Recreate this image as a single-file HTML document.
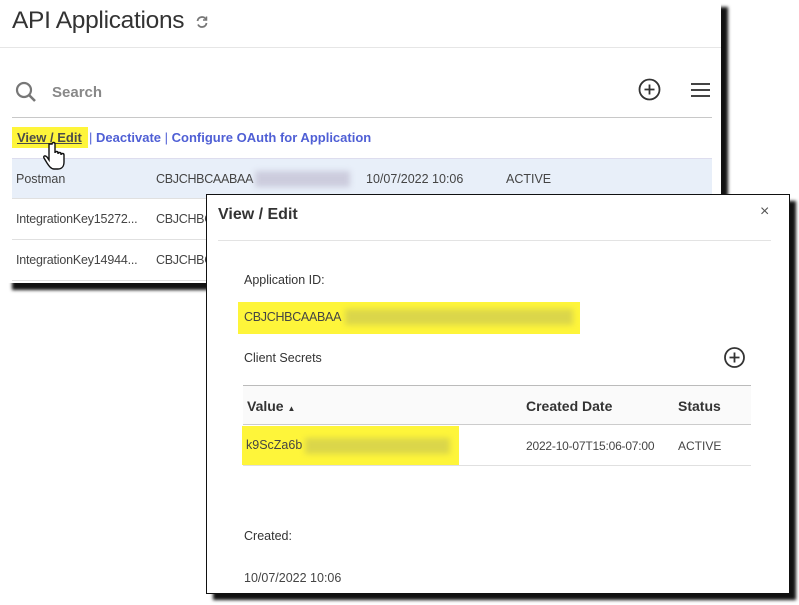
<!DOCTYPE html>
<html><head><style>
*{margin:0;padding:0;box-sizing:border-box}
body{width:799px;height:605px;background:#fff;position:relative;overflow:hidden;font-family:"Liberation Sans",sans-serif;color:#444}
.a{position:absolute;white-space:nowrap}
.t13{font-size:12.5px}
</style></head><body>
<div class="a" style="left:12px;top:7px;width:716px;height:283px;background:#111;filter:blur(1.5px)"></div>
<div class="a" style="left:0;top:0;width:721px;height:283px;background:#fff"></div>
<div class="a" style="left:12px;top:7px;font-size:24.5px;color:#333;letter-spacing:-0.3px">API Applications</div>
<svg class="a" style="left:195px;top:15px" width="14" height="14" viewBox="0 0 14 14"><path d="M2.5 6A4.5 4.5 0 0 1 11 4.5M11.5 8A4.5 4.5 0 0 1 3 9.5" fill="none" stroke="#777" stroke-width="1.8"/><path d="M11.5 1.5v3.5H8" fill="none" stroke="#777" stroke-width="1.5"/></svg>
<div class="a" style="left:0;top:47px;width:721px;height:1px;background:#e6e6e6"></div>
<svg class="a" style="left:15px;top:81px" width="22" height="22" viewBox="0 0 22 22"><circle cx="9" cy="9" r="7" fill="none" stroke="#777" stroke-width="2.2"/><path d="M14 14l6 6" stroke="#777" stroke-width="2.6"/></svg>
<div class="a" style="left:52px;top:84px;font-size:15px;font-weight:bold;color:#888">Search</div>
<svg class="a" style="left:638px;top:78px" width="23" height="23" viewBox="0 0 23 23"><circle cx="11.5" cy="11.5" r="10" fill="none" stroke="#333" stroke-width="1.8"/><path d="M11.5 6.5v10M6.5 11.5h10" stroke="#333" stroke-width="1.8"/></svg>
<div class="a" style="left:691px;top:83px;width:19px;height:2px;background:#444"></div>
<div class="a" style="left:691px;top:89px;width:19px;height:2px;background:#444"></div>
<div class="a" style="left:691px;top:95px;width:19px;height:2px;background:#444"></div>
<div class="a" style="left:12px;top:117px;width:700px;height:1px;background:#c8c8c8"></div>
<div class="a" style="left:12px;top:127px;width:76px;height:21px;background:#fef53a"></div>
<div class="a" style="left:17px;top:130px;font-size:13px;font-weight:bold;color:#4a4a4a;text-decoration:underline">View / Edit</div>
<div class="a" style="left:89px;top:130px;font-size:13px;font-weight:bold;color:#4f5fd5"><span style="font-weight:normal">|</span> Deactivate <span style="font-weight:normal">|</span> Configure OAuth for Application</div>
<div class="a" style="left:12px;top:158px;width:700px;height:40px;background:#e8eff9;border-top:1px solid #dde"></div>
<div class="a t13" style="left:16px;top:172px">Postman</div>
<div class="a t13" style="left:156px;top:172px;letter-spacing:-0.3px">CBJCHBCAABAA</div>
<div class="a" style="left:255px;top:171px;width:95px;height:16px;background:#ccd;filter:blur(3px)"></div>
<div class="a t13" style="left:366px;top:172px">10/07/2022 10:06</div>
<div class="a t13" style="left:506px;top:172px">ACTIVE</div>
<div class="a" style="left:12px;top:198px;width:700px;height:1px;background:#e0e0e0"></div>
<div class="a t13" style="left:16px;top:212px;letter-spacing:-0.2px">IntegrationKey15272...</div>
<div class="a t13" style="left:156px;top:212px;letter-spacing:-0.3px">CBJCHBC</div>
<div class="a" style="left:12px;top:239px;width:700px;height:1px;background:#e0e0e0"></div>
<div class="a t13" style="left:16px;top:253px;letter-spacing:-0.2px">IntegrationKey14944...</div>
<div class="a t13" style="left:156px;top:253px;letter-spacing:-0.3px">CBJCHBC</div>
<div class="a" style="left:12px;top:280px;width:700px;height:1px;background:#e0e0e0"></div>
<svg class="a" style="left:43px;top:141px;z-index:5" width="28" height="32" viewBox="0 0 28 32"><path d="M9 3c0-2 3-2 3 0v9c0-2 3-2 3 0v1c0-2 3-2 3 0v1c0-2 3-2 3 0v7c0 4-2 7-6 7h-4c-3 0-5-3-7-6l-3-5c-1-2 1-3 3-1l2 3V3z" fill="#fff" stroke="#111" stroke-width="1.4"/></svg>
<div class="a" style="left:213px;top:201px;width:583px;height:399px;background:#111;filter:blur(1.5px)"></div>
<div class="a" style="left:206px;top:194px;width:584px;height:400px;background:#fff;border:1px solid #111"></div>
<div class="a" style="left:218px;top:206px;font-size:16px;font-weight:bold;color:#333">View / Edit</div>
<div class="a" style="left:760px;top:203px;font-size:16px;color:#555">×</div>
<div class="a" style="left:218px;top:240px;width:553px;height:1px;background:#e3e3e3"></div>
<div class="a t13" style="left:244px;top:273px;color:#333">Application ID:</div>
<div class="a" style="left:238px;top:302px;width:342px;height:32px;background:#fef53a"></div>
<div class="a t13" style="left:244px;top:310px;color:#444;letter-spacing:-0.3px">CBJCHBCAABAA</div>
<div class="a" style="left:345px;top:309px;width:228px;height:16px;background:#dbd64a;filter:blur(3px)"></div>
<div class="a t13" style="left:244px;top:351px;color:#333">Client Secrets</div>
<svg class="a" style="left:723px;top:346px" width="23" height="23" viewBox="0 0 23 23"><circle cx="11.5" cy="11.5" r="9.5" fill="none" stroke="#333" stroke-width="1.8"/><path d="M11.5 6.5v10M6.5 11.5h10" stroke="#333" stroke-width="1.8"/></svg>
<div class="a" style="left:243px;top:385px;width:508px;height:40px;background:#fafafa;border-top:1px solid #bbb;border-bottom:1px solid #ccc"></div>
<div class="a" style="left:247px;top:398px;font-size:14px;font-weight:bold;color:#333">Value <span style="font-size:8px">▲</span></div>
<div class="a" style="left:526px;top:398px;font-size:14px;font-weight:bold;color:#333">Created Date</div>
<div class="a" style="left:678px;top:398px;font-size:14px;font-weight:bold;color:#333">Status</div>
<div class="a" style="left:242px;top:426px;width:217px;height:39px;background:#fef53a"></div>
<div class="a t13" style="left:246px;top:438px">k9ScZa6b</div>
<div class="a" style="left:305px;top:438px;width:145px;height:16px;background:#dbd64a;filter:blur(3px)"></div>
<div class="a" style="left:526px;top:439px;font-size:12px;letter-spacing:-0.2px">2022-10-07T15:06-07:00</div>
<div class="a" style="left:678px;top:439px;font-size:12px">ACTIVE</div>
<div class="a" style="left:243px;top:465px;width:508px;height:1px;background:#e0e0e0"></div>
<div class="a t13" style="left:244px;top:529px;color:#333">Created:</div>
<div class="a t13" style="left:244px;top:571px">10/07/2022 10:06</div>
</body></html>
